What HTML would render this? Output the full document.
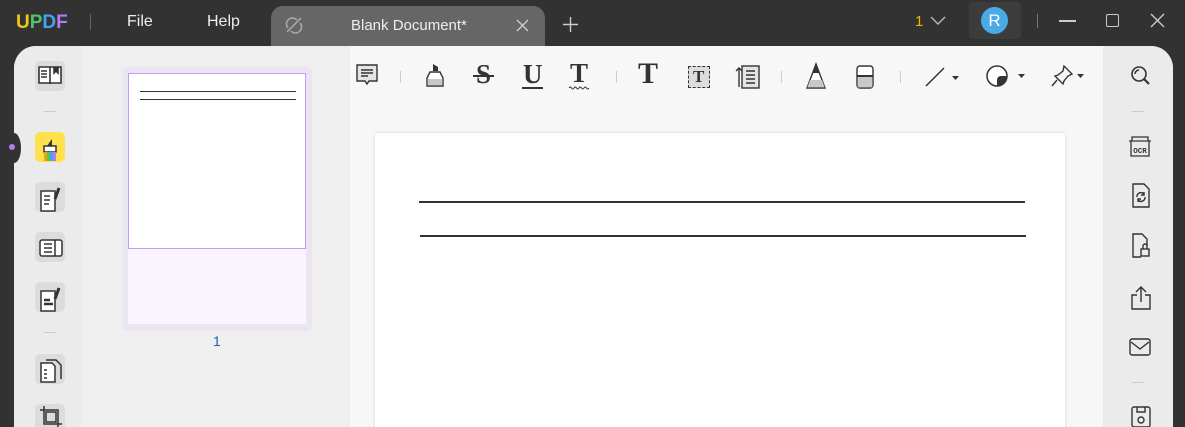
<!DOCTYPE html>
<html><head><meta charset="utf-8"><style>
*{margin:0;padding:0;box-sizing:border-box}
body{width:1185px;height:427px;background:#323232;font-family:"Liberation Sans",sans-serif;position:relative;overflow:hidden}
.abs{position:absolute}
.logo{left:16px;top:12px;font-weight:bold;font-size:19px;letter-spacing:0px}
.menu{color:#eee;font-size:16px;top:13px}
.tab{left:271px;top:6px;width:274px;height:40px;background:#666;border-radius:12px 12px 0 0}
.content{left:14px;top:46px;width:1159px;height:381px;background:#f7f7f7;border-radius:22px 22px 0 0;overflow:hidden}
.lsb{left:0;top:0;width:68px;height:381px;background:#ebebeb}
.thumbs{left:68px;top:0;width:268px;height:381px;background:#efefef}
.rsb{left:1089px;top:0;width:70px;height:381px;background:#ebebeb}
.ib{position:absolute;left:21px;width:30px;height:30px;background:#dcdcdc;border-radius:5px}
.sep{position:absolute;width:12px;height:1px;background:#ccc}
.vs{position:absolute;top:71px;width:1px;height:12px;background:#ccc}
svg{position:absolute;overflow:visible}
.tt{font-family:'Liberation Serif',serif;font-weight:bold;color:#333;position:absolute}
</style></head><body>
<div class="abs logo"><span style="color:#f5c518">U</span><span style="color:#4fc36b">P</span><span style="color:#3fa7f0">D</span><span style="color:#b57cf0">F</span></div>
<div class="abs" style="left:90px;top:14px;width:1px;height:16px;background:#666"></div>
<div class="abs menu" style="left:127px">File</div>
<div class="abs menu" style="left:207px">Help</div>
<div class="abs tab"></div>
<svg style="left:284px;top:15px" width="20" height="20" viewBox="0 0 20 20" fill="none" stroke="#aaa" stroke-width="1.5"><path d="M4 13a6 6 0 0 1 9-8M16 8a6 6 0 0 1-9 8M3 17L17 3"/></svg>
<div class="abs" style="left:351px;top:17px;color:#eee;font-size:15px">Blank Document*</div>
<svg style="left:517px;top:20px" width="11" height="11" viewBox="0 0 11 11" stroke="#ccc" stroke-width="1.4"><path d="M0 0L11 11M11 0L0 11"/></svg>
<svg style="left:563px;top:17px" width="15" height="15" viewBox="0 0 15 15" stroke="#ccc" stroke-width="1.4"><path d="M7.5 0V15M0 7.5H15"/></svg>
<div class="abs" style="left:915px;top:13px;color:#f0b400;font-size:15px">1</div>
<svg style="left:931px;top:17px" width="14" height="8" viewBox="0 0 14 8" fill="none" stroke="#bbb" stroke-width="1.4"><path d="M0 0L7 7L14 0"/></svg>
<div class="abs" style="left:969px;top:2px;width:52px;height:37px;background:#3c3c3c;border-radius:4px"></div>
<div class="abs" style="left:981px;top:7px;width:27px;height:27px;border-radius:50%;background:#4aa9e6;color:#fff;font-size:17px;text-align:center;line-height:27px">R</div>
<div class="abs" style="left:1037px;top:14px;width:1px;height:14px;background:#777"></div>
<div class="abs" style="left:1059px;top:20px;width:17px;height:1.5px;background:#ccc"></div>
<div class="abs" style="left:1106px;top:14px;width:13px;height:13px;border:1.5px solid #ccc;border-radius:2px"></div>
<svg style="left:1151px;top:14px" width="13" height="13" viewBox="0 0 13 13" stroke="#ccc" stroke-width="1.4"><path d="M0 0L13 13M13 0L0 13"/></svg>

<div class="abs content">
 <div class="abs lsb">
  <div class="ib" style="top:15px"></div>
  <svg style="left:23px;top:17px" width="26" height="26" viewBox="0 0 26 26" fill="#fff" stroke="#333" stroke-width="1.6"><path d="M2 4h22v16H2z"/><path d="M4 8h6M4 11h6M4 14h6M13 4v17" /><path d="M17 4v6l2-2 2 2V4" fill="#333"/></svg>
  <div class="sep" style="left:30px;top:65px"></div>
  <div class="ib" style="top:86px;background:#ffe14d"></div>
  <svg style="left:25px;top:90px" width="22" height="26" viewBox="0 0 22 26"><path d="M8 10L13 3V10z" fill="#333"/><path d="M5 10h12v6H5z" fill="#fff" stroke="#333" stroke-width="1.5"/><rect x="5" y="16" width="3" height="9" fill="#f0a500"/><rect x="8" y="16" width="3" height="9" fill="#4fc36b"/><rect x="11" y="16" width="3" height="9" fill="#3fa7f0"/><rect x="14" y="16" width="3" height="9" fill="#b57cf0"/></svg>
  <div class="ib" style="top:136px"></div>
  <svg style="left:26px;top:140px" width="22" height="26" viewBox="0 0 22 26" fill="#fff" stroke="#333" stroke-width="1.5"><path d="M1 5h14v20H1z"/><path d="M4 10h6M4 14h6M4 18h5"/><path d="M15 13l4-11" stroke-width="3"/></svg>
  <div class="ib" style="top:186px"></div>
  <svg style="left:25px;top:193px" width="24" height="18" viewBox="0 0 24 18" fill="#fff" stroke="#333" stroke-width="1.5"><rect x="1" y="1" width="22" height="16" rx="2"/><path d="M5 5h8M5 9h8M5 13h8M16 1v16"/></svg>
  <div class="ib" style="top:236px"></div>
  <svg style="left:26px;top:240px" width="22" height="26" viewBox="0 0 22 26" fill="#fff" stroke="#333" stroke-width="1.5"><path d="M1 5h14v20H1z"/><path d="M4 14h6M4 18h9" stroke-width="2.5"/><path d="M15 13l4-11" stroke-width="3"/></svg>
  <div class="sep" style="left:30px;top:286px"></div>
  <div class="ib" style="top:308px"></div>
  <svg style="left:26px;top:313px" width="22" height="24" viewBox="0 0 22 24" fill="#fff" stroke="#333" stroke-width="1.5"><path d="M1 4h11l3 3v16H1z"/><path d="M6 1h10l5 5v14" fill="none"/><path d="M4 11h3M4 15h3M4 19h3"/></svg>
  <div class="ib" style="top:358px"></div>
  <svg style="left:25px;top:358px" width="24" height="24" viewBox="0 0 24 24" fill="none" stroke="#333" stroke-width="1.5"><path d="M5 2v18h18M1 6h18v18"/><rect x="7" y="8" width="10" height="10"/></svg>
 </div>
 <div class="abs" style="left:-7px;top:87px;width:14px;height:30px;border-radius:50%;background:#323232"></div>
 <div class="abs thumbs">
  <div class="abs" style="left:40px;top:21px;width:190px;height:264px;background:#ebe5f2;border-radius:5px"></div>
  <div class="abs" style="left:46px;top:27px;width:178px;height:251px;background:#f8f3fc"></div>
  <div class="abs" style="left:46px;top:27px;width:178px;height:176px;background:#fff;border:1.5px solid #c59bf5"></div>
  <div class="abs" style="left:58px;top:45px;width:156px;height:1px;background:#333"></div>
  <div class="abs" style="left:58px;top:53px;width:156px;height:1px;background:#333"></div>
  <div class="abs" style="left:131px;top:287px;color:#1a5fa8;font-size:14px">1</div>
 </div>
 <svg style="left:342px;top:18px" width="22" height="24" viewBox="0 0 22 24" fill="#e4e4e4" stroke="#333" stroke-width="1.4"><path d="M1 1h20v16H13l-2 3-2-3H1z"/><path d="M5 6h12M5 9h12M5 12h7"/></svg>
 <div class="vs" style="left:386px;top:25px"></div>
 <svg style="left:412px;top:17px" width="18" height="24" viewBox="0 0 18 24"><path d="M7 1L12 4V8H7z" fill="#333"/><path d="M4 9h10l3 6v8H1v-8z" fill="#fff" stroke="#333" stroke-width="1.4"/><rect x="1.7" y="16" width="14.6" height="6.3" fill="#c8c8c8"/></svg>
 <div class="tt" style="left:462px;top:13px;font-size:27px">S</div>
 <div class="abs" style="left:459px;top:29px;width:21px;height:1.6px;background:#333"></div>
 <div class="tt" style="left:509px;top:13px;font-size:27px">U</div>
 <div class="abs" style="left:508px;top:41px;width:21px;height:1.8px;background:#333"></div>
 <div class="tt" style="left:556px;top:12px;font-size:27px">T</div>
 <svg style="left:555px;top:40px" width="20" height="4" viewBox="0 0 20 4" fill="none" stroke="#333" stroke-width="1"><path d="M0 2q1.25-2 2.5 0t2.5 0t2.5 0t2.5 0t2.5 0t2.5 0t2.5 0t2.5 0"/></svg>
 <div class="vs" style="left:602px;top:25px"></div>
 <div class="tt" style="left:624px;top:11px;font-size:30px">T</div>
 <div class="abs" style="left:674px;top:20px;width:22px;height:22px;border:1.5px dashed #333;background:#ddd"></div>
 <div class="tt" style="left:679px;top:21px;font-size:17px">T</div>
 <svg style="left:720px;top:19px" width="26" height="24" viewBox="0 0 26 24" fill="#e4e4e4" stroke="#333" stroke-width="1.4"><rect x="8" y="1" width="17" height="22"/><path d="M12 6h9M12 10h9M12 14h9M12 18h9"/><path d="M5 22V3M2 6l3-3 3 3" fill="none"/></svg>
 <div class="vs" style="left:767px;top:25px"></div>
 <svg style="left:792px;top:17px" width="20" height="26" viewBox="0 0 20 26"><path d="M10 1L19 25H1z" fill="#fff" stroke="#333" stroke-width="1.4"/><path d="M10 1L13.5 10H6.5z" fill="#333"/><path d="M4 17H16L18.6 24.3H1.4z" fill="#c8c8c8"/></svg>
 <svg style="left:842px;top:19px" width="18" height="24" viewBox="0 0 18 24"><rect x="1" y="1" width="16" height="22" rx="3" fill="#fff" stroke="#333" stroke-width="1.4"/><rect x="1.7" y="12" width="14.6" height="10.3" fill="#c8c8c8"/><rect x="1" y="10" width="16" height="2" fill="#333"/></svg>
 <div class="vs" style="left:886px;top:25px"></div>
 <svg style="left:911px;top:21px" width="46" height="20" viewBox="0 0 46 20"><path d="M1 19L19 1" stroke="#333" stroke-width="1.5"/><path d="M27 9h7l-3.5 4z" fill="#333"/></svg>
 <svg style="left:972px;top:19px" width="42" height="24" viewBox="0 0 42 24"><circle cx="11" cy="11" r="10" fill="#fff" stroke="#333" stroke-width="1.5"/><path d="M21 11a10 10 0 0 1-10 10V15a4 4 0 0 1 4-4z" fill="#333"/><path d="M32 9h7l-3.5 4z" fill="#333"/></svg>
 <svg style="left:1037px;top:19px" width="38" height="24" viewBox="0 0 38 24" fill="none" stroke="#333" stroke-width="1.4"><path d="M13 1l8 8-4 2-4 5-1 3-8-8 3-1 5-4z"/><path d="M6 15l-5 6"/><path d="M26 9h7l-3.5 4z" fill="#333" stroke="none"/></svg>
 <div class="abs" style="left:361px;top:87px;width:690px;height:300px;background:#fff;box-shadow:0 0 3px rgba(0,0,0,.15)"></div>
 <div class="abs" style="left:405px;top:155px;width:606px;height:2px;background:#333"></div>
 <div class="abs" style="left:406px;top:189px;width:606px;height:2px;background:#333"></div>
 <div class="abs rsb">
  <svg style="left:28px;top:20px" width="20" height="20" viewBox="0 0 20 20" fill="none" stroke="#333" stroke-width="1.6"><circle cx="8" cy="8" r="7"/><path d="M13 13l5 5" stroke-width="2.2"/><path d="M4 8a4 4 0 0 1 4-4"/></svg>
  <div class="sep" style="left:29px;top:65px"></div>
  <svg style="left:25px;top:89px" width="24" height="22" viewBox="0 0 24 22" fill="none" stroke="#333" stroke-width="1.3"><path d="M1 6h22M4 6V2h16v4M3 6v15h18V6"/><text x="12" y="18" font-size="7.5" font-family="Liberation Mono" text-anchor="middle" fill="#333" stroke="none" font-weight="bold">OCR</text></svg>
  <svg style="left:28px;top:137px" width="20" height="26" viewBox="0 0 20 26" fill="none" stroke="#333" stroke-width="1.4"><path d="M2 1h11l5 5v18H2z"/><path d="M6 14a4 4 0 0 1 7-3M14 14a4 4 0 0 1-7 3"/><path d="M13 9v3h-3M7 19v-3h3"/></svg>
  <svg style="left:28px;top:187px" width="20" height="26" viewBox="0 0 20 26" fill="none" stroke="#333" stroke-width="1.4"><path d="M10 24H2V1h9l5 5v7"/><rect x="10" y="16" width="8" height="7"/><path d="M12 16v-3a2 2 0 0 1 4 0v3"/></svg>
  <svg style="left:27px;top:240px" width="22" height="24" viewBox="0 0 22 24" fill="none" stroke="#333" stroke-width="1.4"><path d="M7 9H2v14h18V9h-5M11 16V1M6 6l5-5 5 5"/></svg>
  <svg style="left:26px;top:292px" width="22" height="18" viewBox="0 0 22 18" fill="none" stroke="#333" stroke-width="1.4"><rect x="1" y="1" width="20" height="16" rx="2"/><path d="M2 4l9 7 9-7"/></svg>
  <div class="sep" style="left:29px;top:336px"></div>
  <svg style="left:28px;top:360px" width="20" height="22" viewBox="0 0 20 22" fill="none" stroke="#333" stroke-width="1.4"><rect x="1" y="1" width="18" height="20" rx="2"/><path d="M6 1v5h8V1"/><circle cx="10" cy="14" r="3"/></svg>
 </div>
</div>
<div class="abs" style="left:9px;top:144px;width:6px;height:6px;border-radius:50%;background:#b57cf0"></div>
</body></html>
